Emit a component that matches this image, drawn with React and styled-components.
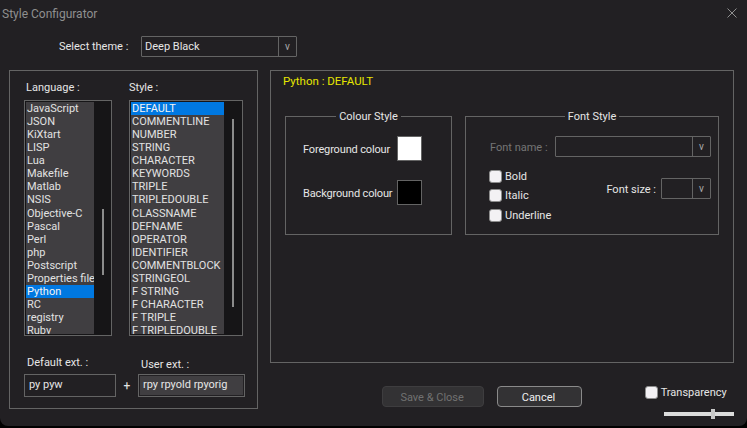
import React from "react";
import styled, { createGlobalStyle } from "styled-components";

const Global = createGlobalStyle`
  html, body { margin: 0; padding: 0; background: #000; }
  body { font-family: Roboto, "Noto Sans", sans-serif; font-size: 11px; color: #e6e6e6; }
  * { box-sizing: border-box; }
`;

const line = "#646464";

const Win = styled.div`
  width: 747px; height: 426px; background: #222023; border-radius: 0 0 8px 8px;
  overflow: hidden; display: flex; flex-direction: column;
`;
const TitleBar = styled.div`
  height: 26px; padding: 0 10px 0 2px; display: flex; align-items: center; justify-content: space-between;
  color: #8f8f8f; font-size: 12px;
`;
const TitleText = styled.span`padding-top: 2px;`;
const ThemeRow = styled.div`
  margin-top: 10px; height: 21px; padding-left: 59px; display: flex; align-items: center;
`;
const ThemeLabel = styled.span`
  width: 82px; line-height: 14px; white-space: nowrap;
`;
const Label = styled.span`
  color: ${p => (p.$dim ? "#757575" : "#e6e6e6")}; white-space: nowrap; line-height: 14px;
`;
const RowLabel = styled(Label)`padding-top: 2px;`;
const Combo = styled.div`
  width: ${p => p.$w}px; height: 21px; border: 1px solid ${line}; border-radius: 1px; display: flex;
  padding-left: 3px; align-items: center; justify-content: space-between;
`;
const ComboBtn = styled.span`
  width: 18px; height: 100%; border-left: 1px solid ${line}; color: #a9a9a9; display: flex;
  align-items: center; justify-content: center; font-size: 10px;
`;
const Main = styled.div`
  margin-top: 13px; padding-left: 9px; display: flex; gap: 12px;
`;
const LeftGroup = styled.section`
  width: 249px; height: 339px; border: 1px solid ${line}; padding: 10px 0 0 14px;
`;
const Cols = styled.div`display: flex; gap: 17px;`;
const Col = styled.div`
  display: flex; flex-direction: column; gap: 5px;
`;
const ColHead = styled(Label)`padding-left: ${p => p.$pl || 0}px;`;
const ListBox = styled.div`
  width: ${p => p.$w}px; height: 236px; border: 1px solid ${line}; background: #161517; padding: 1px;
  display: flex; position: relative;
`;
const Items = styled.ul`
  list-style: none; margin: 0; padding: 0; width: ${p => p.$w}px; height: 232px; overflow: hidden;
  background: #403e41;
`;
const Item = styled.li`
  height: 13.07px; line-height: 13.07px; padding-left: 1px; white-space: nowrap;
  background: ${p => (p.$on ? "#0078e1" : "transparent")}; color: ${p => (p.$on ? "#f4f4f4" : "#e2e2e2")};
`;
const Thumb = styled.span`
  position: absolute; width: 2px; background: #8b8b8b; left: ${p => p.$l}px; top: ${p => p.$t}px; height: ${p => p.$h}px;
`;
const ExtRow = styled.div`
  margin-top: 20px; display: flex; align-items: flex-end;
`;
const ExtCol = styled.div`display: flex; flex-direction: column; gap: ${p => p.$g}px;`;
const Plus = styled.span`
  width: 22px; height: 22px; line-height: 22px; text-align: center; font-size: 12px;
`;
const ExtInput = styled.div`
  width: ${p => p.$w}px; height: 23px; border: 1px solid ${line}; padding: ${p => (p.$fill ? "1px" : "0")};
`;
const ExtFill = styled.div`
  height: 100%; padding-left: ${p => p.$pl}px; line-height: ${p => (p.$fill ? 17 : 19)}px;
  background: ${p => (p.$fill ? "#403e41" : "transparent")}; white-space: nowrap;
`;
const Right = styled.div`width: 464px; display: flex; flex-direction: column;`;
const RightPanel = styled.section`
  height: 293px; border: 1px solid ${line}; padding: 3px 14px 0 12px;
`;
const Heading = styled.div`color: #e6e600; height: 15px; line-height: 15px; font-size: 11.5px;`;
const Groups = styled.div`margin-top: 28px; display: flex; gap: 13px; padding-left: 2px;`;
const Field = styled.fieldset`
  margin: -9px 0 0; width: ${p => p.$w}px; height: 127px; border: 1px solid ${line}; padding: 0; min-width: 0;
`;
const Legend = styled.legend`
  padding: 2px 3px 0; margin: 0 auto; line-height: 14px; color: #e6e6e6;
`;
const ColourRow = styled.div`
  display: flex; align-items: center; justify-content: space-between; padding: 0 29px 0 17px;
  margin-top: ${p => p.$mt}px;
`;
const ColourLabel = styled(RowLabel)`letter-spacing: -0.15px;`;
const Swatch = styled.span`
  width: 25px; height: 25px; border: 1px solid ${line}; background: ${p => p.$c};
`;
const FontGrid = styled.div`
  padding: 12px 7px 0 24px;
`;
const FontRow = styled.div`display: flex; align-items: center; justify-content: space-between;`;
const Lower = styled.div`margin-top: 12px; display: flex; justify-content: space-between;`;
const Checks = styled.div`display: flex; flex-direction: column; gap: 5.5px; margin-left: -1px;`;
const Check = styled.label`display: flex; align-items: center; gap: 3px; height: 14px;`;
const Box = styled.span`
  width: 13px; height: 13px; border-radius: 3px; background: #f3f1f4; border: 1px solid #8d8d8d; flex: none;
`;
const SizeRow = styled.div`display: flex; align-items: center; gap: 5px; margin-top: 9px; height: 21px;`;
const Footer = styled.div`
  display: flex; padding: 23px 0 0 112px;
`;
const Btn = styled.button`
  width: ${p => p.$w}px; height: 21px; margin-right: 13px; padding: 1px 2px 0 0; font: inherit; border-radius: 4px;
  background: #333234; color: ${p => (p.$off ? "#717171" : "#f0f0f0")};
  border: 1px solid ${p => (p.$off ? "#3e3d3f" : "#8a8a8a")};
`;
const Trans = styled.div`
  margin-left: 50px; margin-top: -1px; display: flex; flex-direction: column; width: 90px;
`;
const Slider = styled.div`
  margin: 13px 0 0 19px; width: 70px; height: 4px; background: #dcdcdc; position: relative;
`;
const SliderThumb = styled.span`
  position: absolute; left: 47px; top: -3px; width: 4px; height: 10px; background: #c8c8c8;
`;

const langs = ["JavaScript","JSON","KiXtart","LISP","Lua","Makefile","Matlab","NSIS","Objective-C","Pascal","Perl","php","Postscript","Properties file","Python","RC","registry","Ruby"];
const styles = ["DEFAULT","COMMENTLINE","NUMBER","STRING","CHARACTER","KEYWORDS","TRIPLE","TRIPLEDOUBLE","CLASSNAME","DEFNAME","OPERATOR","IDENTIFIER","COMMENTBLOCK","STRINGEOL","F STRING","F CHARACTER","F TRIPLE","F TRIPLEDOUBLE"];

export default function App() {
  return (
    <Win>
      <Global />
      <TitleBar>
        <TitleText>Style Configurator</TitleText>
        <svg width="10" height="10" viewBox="0 0 10 10"><path d="M0.5 0.5 9.5 9.5M9.5 0.5 0.5 9.5" stroke="#8f8f8f" fill="none" /></svg>
      </TitleBar>
      <ThemeRow>
        <ThemeLabel>Select theme :</ThemeLabel>
        <Combo $w={156}>Deep Black<ComboBtn>v</ComboBtn></Combo>
      </ThemeRow>
      <Main>
        <LeftGroup>
          <Cols>
            <Col>
              <ColHead $pl={2}>Language :</ColHead>
              <ListBox $w={88}>
                <Items $w={68}>{langs.map(l => <Item key={l} $on={l === "Python"}>{l}</Item>)}</Items>
                <Thumb $l={77} $t={108} $h={66} />
              </ListBox>
            </Col>
            <Col>
              <ColHead>Style :</ColHead>
              <ListBox $w={114}>
                <Items $w={93}>{styles.map(s => <Item key={s} $on={s === "DEFAULT"}>{s}</Item>)}</Items>
                <Thumb $l={102} $t={18} $h={188} />
              </ListBox>
            </Col>
          </Cols>
          <ExtRow>
            <ExtCol $g={4}>
              <ColHead $pl={3}>Default ext. :</ColHead>
              <ExtInput $w={92}><ExtFill $pl={4}>py pyw</ExtFill></ExtInput>
            </ExtCol>
            <Plus>+</Plus>
            <ExtCol $g={2}>
              <ColHead $pl={3}>User ext. :</ColHead>
              <ExtInput $w={107} $fill><ExtFill $fill $pl={3}>rpy rpyold rpyorig</ExtFill></ExtInput>
            </ExtCol>
          </ExtRow>
        </LeftGroup>
        <Right>
          <RightPanel>
            <Heading>Python : DEFAULT</Heading>
            <Groups>
              <Field $w={167}>
                <Legend>Colour Style</Legend>
                <ColourRow $mt={12}><ColourLabel>Foreground colour</ColourLabel><Swatch $c="#ffffff" /></ColourRow>
                <ColourRow $mt={19}><ColourLabel>Background colour</ColourLabel><Swatch $c="#000000" /></ColourRow>
              </Field>
              <Field $w={254}>
                <Legend>Font Style</Legend>
                <FontGrid>
                  <FontRow>
                    <RowLabel $dim>Font name :</RowLabel>
                    <Combo $w={156}><span /><ComboBtn>v</ComboBtn></Combo>
                  </FontRow>
                  <Lower>
                    <Checks>
                      <Check><Box />Bold</Check>
                      <Check><Box />Italic</Check>
                      <Check><Box />Underline</Check>
                    </Checks>
                    <SizeRow>
                      <RowLabel>Font size :</RowLabel>
                      <Combo $w={50}><span /><ComboBtn>v</ComboBtn></Combo>
                    </SizeRow>
                  </Lower>
                </FontGrid>
              </Field>
            </Groups>
          </RightPanel>
          <Footer>
            <Btn $w={103} $off>Save &amp; Close</Btn>
            <Btn $w={85}>Cancel</Btn>
            <Trans>
              <Check><Box />Transparency</Check>
              <Slider><SliderThumb /></Slider>
            </Trans>
          </Footer>
        </Right>
      </Main>
    </Win>
  );
}
